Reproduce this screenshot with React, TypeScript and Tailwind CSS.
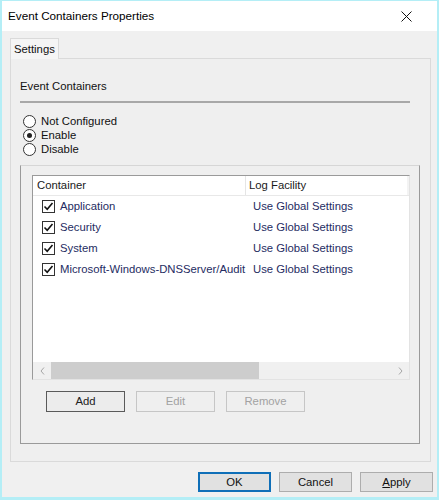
import React from "react"

const font = { fontFamily: '"Liberation Sans", Arial, sans-serif' }

const rows = [
  "Application",
  "Security",
  "System",
  "Microsoft-Windows-DNSServer/Audit",
]

function Radio({ label, checked }: { label: string; checked?: boolean }) {
  return (
    <div className="flex h-[14px] items-center">
      <span className="ml-[3px] flex size-[13px] items-center justify-center rounded-full border border-[#333] bg-white">
        {checked && <span className="size-[5px] rounded-full bg-[#222]" />}
      </span>
      <span className="ml-[5px] leading-[14px] text-[#111]">{label}</span>
    </div>
  )
}

function Check() {
  return (
    <span className="flex size-[13px] shrink-0 items-center justify-center border border-[#333] bg-white">
      <svg width="11" height="11" viewBox="0 0 11 11">
        <path d="M1.5 5.5 L4.2 8.2 L9.5 2" fill="none" stroke="#111" strokeWidth="1.6" />
      </svg>
    </span>
  )
}

function Btn({ children, variant = "normal" }: { children: React.ReactNode; variant?: "normal" | "focus" | "disabled" | "default" }) {
  const styles = {
    normal: "border border-[#adadad] bg-[#e1e1e1] text-[#111]",
    focus: "border border-[#5a5a5a] bg-[#ececec] text-[#222]",
    disabled: "border border-[#c6c6c6] bg-[#efefef] text-[#a2a2a2]",
    default: "border-2 border-[#0f6fb8] bg-[#e1e1e1] text-[#111]",
  }[variant]
  return (
    <div className={`flex h-full items-center justify-center ${styles}`}>
      {children}
    </div>
  )
}

export default function App() {
  return (
    <div
      className="flex h-[500px] w-[439px] flex-col border-x-2 border-t border-b-[3px] border-[#b4eef6] bg-[#f0f0f0] text-[11.3px]"
      style={font}
    >
      {/* Title bar */}
      <div className="flex h-[30px] shrink-0 items-center justify-between bg-white pl-[6px] pr-[25px]">
        <span className="text-[11.7px] text-black">Event Containers Properties</span>
        <svg width="11" height="11" viewBox="0 0 11 11">
          <path d="M0.5 0.5 L10.5 10.5 M10.5 0.5 L0.5 10.5" stroke="#111" strokeWidth="1" />
        </svg>
      </div>

      {/* Tabs */}
      <div className="mt-[7px] pl-[8px]">
        <div className="relative z-10 -mb-px flex h-[21px] w-[49px] items-center border border-b-0 border-[#dadada] bg-[#f5f5f5] pl-[3px] text-[#111]">
          Settings
        </div>
      </div>

      {/* Tab panel */}
      <div className="ml-[8px] mr-[6px] flex h-[404px] flex-col border border-[#dadada] bg-[#efefef] pl-[9px] pt-[19px]">
        <div className="leading-[16px] text-[#111]">Event Containers</div>
        <div className="mt-[7px] h-[2px] w-[390px] bg-[#a8a8a8]" />

        <div className="mt-[11px] flex flex-col">
          <Radio label="Not Configured" />
          <Radio label="Enable" checked />
          <Radio label="Disable" />
        </div>

        {/* Group */}
        <div className="mt-[9px] flex h-[279px] w-[400px] flex-col border border-[#9a9a9a] border-t-[#d6d6d6] pl-[11px] pt-[9px]">
          <div className="flex h-[205px] w-[378px] flex-col border border-[#9a9a9a] border-b-[#e3e3e3] border-r-[#e3e3e3] bg-white">
            <div className="flex h-[20px] shrink-0 items-center border-b border-[#e8e8e8] text-[#1a1a1a]">
              <div className="flex h-full w-[213px] items-center border-r border-[#e5e5e5] pl-[4px]">Container</div>
              <div className="flex h-full flex-1 items-center pl-[3px]">Log Facility</div>
              <div className="h-full w-[2px] bg-[#f3f3f3]" />
            </div>
            <div className="flex flex-1 flex-col">
              {rows.map((r) => (
                <div key={r} className="flex h-[21px] items-center text-[#252c62]">
                  <div className="flex w-[213px] items-center gap-[5px] pl-[9px]">
                    <Check />
                    <span className="whitespace-nowrap">{r}</span>
                  </div>
                  <div className="pl-[7px]">Use Global Settings</div>
                </div>
              ))}
            </div>
            {/* Horizontal scrollbar */}
            <div className="flex h-[17px] shrink-0 items-center bg-[#f0f0f0]">
              <div className="flex h-full w-[18px] items-center justify-center">
                <svg width="5" height="8" viewBox="0 0 5 8">
                  <path d="M4 0.5 L1 4 L4 7.5" fill="none" stroke="#a6a6a6" strokeWidth="1" />
                </svg>
              </div>
              <div className="h-full w-[208px] bg-[#cdcdcd]" />
              <div className="flex-1" />
              <div className="flex h-full w-[18px] items-center justify-center">
                <svg width="5" height="8" viewBox="0 0 5 8">
                  <path d="M1 0.5 L4 4 L1 7.5" fill="none" stroke="#a6a6a6" strokeWidth="1" />
                </svg>
              </div>
            </div>
          </div>

          <div className="ml-[14px] mt-[11px] flex gap-[11px]">
            <div className="h-[21px] w-[79px]">
              <Btn variant="focus">Add</Btn>
            </div>
            <div className="h-[21px] w-[79px]">
              <Btn variant="disabled">Edit</Btn>
            </div>
            <div className="h-[21px] w-[79px]">
              <Btn variant="disabled">Remove</Btn>
            </div>
          </div>
        </div>
      </div>

      {/* Dialog buttons */}
      <div className="mt-[10px] flex justify-end gap-[8px] pr-[4px]">
        <div className="h-[20px] w-[73px]">
          <Btn variant="default">OK</Btn>
        </div>
        <div className="h-[20px] w-[73px]">
          <Btn>Cancel</Btn>
        </div>
        <div className="h-[20px] w-[73px]">
          <Btn>
            <span>
              <span className="underline">A</span>pply
            </span>
          </Btn>
        </div>
      </div>
    </div>
  )
}
